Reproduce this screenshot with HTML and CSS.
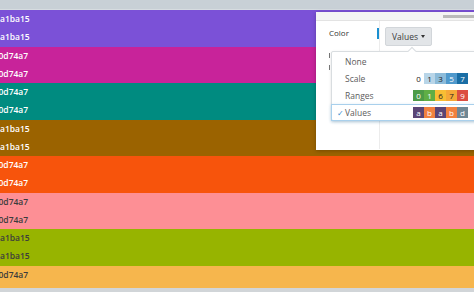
FILE: index.html
```html
<!DOCTYPE html>
<html lang="en">
<head>
    <meta charset="UTF-8">
    <title>Color format</title>
    <link rel="stylesheet" href="styles.css">
</head>
<body>

    <div class="table">
        <div class="table__top"></div>
        <div class="band band--purple">
            <div class="cell">a1ba15</div>
            <div class="cell">a1ba15</div>
        </div>
        <div class="band band--magenta">
            <div class="cell cell--cut">0d74a7</div>
            <div class="cell cell--cut">0d74a7</div>
        </div>
        <div class="band band--teal">
            <div class="cell cell--cut">0d74a7</div>
            <div class="cell cell--cut">0d74a7</div>
        </div>
        <div class="band band--brown">
            <div class="cell">a1ba15</div>
            <div class="cell">a1ba15</div>
        </div>
        <div class="band band--orange">
            <div class="cell cell--cut">0d74a7</div>
            <div class="cell cell--cut">0d74a7</div>
        </div>
        <div class="band band--pink band--dark">
            <div class="cell cell--cut">0d74a7</div>
            <div class="cell cell--cut">0d74a7</div>
        </div>
        <div class="band band--olive band--dark">
            <div class="cell">a1ba15</div>
            <div class="cell">a1ba15</div>
        </div>
        <div class="band band--yellow band--dark band--last">
            <div class="cell cell--cut">0d74a7</div>
        </div>
        <div class="table__scroll"></div>
    </div>

    <div class="editor">
        <div class="editor__head">
            <span class="editor__grip"></span>
        </div>
        <div class="editor__body">
            <div class="editor__labels">
                <div class="editor__label">Color</div>
                <span class="editor__tick"></span>
                <span class="editor__tick"></span>
            </div>
            <div class="editor__fields">
                <span class="editor__focus"></span>
                <button class="editor__btn">Values <span class="caret"></span></button>
            </div>
        </div>

        <ul class="menu">
            <li class="menu__item">None</li>
            <li class="menu__item">Scale
                <span class="swatches">
                    <span class="sw" style="background:#ffffff">0</span>
                    <span class="sw" style="background:#b8d5e8">1</span>
                    <span class="sw" style="background:#8cbbd9">3</span>
                    <span class="sw sw--light" style="background:#4f99cc">5</span>
                    <span class="sw sw--light" style="background:#1a6ea5">7</span>
                </span>
            </li>
            <li class="menu__item">Ranges
                <span class="swatches">
                    <span class="sw sw--light" style="background:#4c9b47">0</span>
                    <span class="sw sw--light" style="background:#5fae45">1</span>
                    <span class="sw" style="background:#f8be34">6</span>
                    <span class="sw" style="background:#f5a838">7</span>
                    <span class="sw sw--light" style="background:#dc4e41">9</span>
                </span>
            </li>
            <li class="menu__item is-selected"><span class="check">&#10003;</span>Values
                <span class="swatches">
                    <span class="sw sw--light" style="background:#5a4575">a</span>
                    <span class="sw sw--light" style="background:#f1813f">b</span>
                    <span class="sw sw--light" style="background:#5a4575">a</span>
                    <span class="sw sw--light" style="background:#f1813f">b</span>
                    <span class="sw sw--light" style="background:#708794">d</span>
                </span>
            </li>
        </ul>
    </div>

</body>
</html>
```

FILE: styles.css
```css
html {
  box-sizing: border-box;
}

*,
*::before,
*::after {
  box-sizing: inherit;
}

body {
  margin: 0;
  width: 474px;
  height: 292px;
  overflow: hidden;
  position: relative;
  font-family: "Open Sans", Lato, sans-serif;
}

ul {
  list-style: none;
  margin: 0;
  padding: 0;
}

button {
  border: 0;
  font-family: inherit;
  font-size: inherit;
  outline: none;
  appearance: none;
}

/* Table behind the editor */

.table {
  display: flex;
  flex-direction: column;
  height: 292px;
}

.table__top {
  height: 10px;
  background-color: #c8d0d6;
  border-bottom: 1px solid #d6dce0;
}

.band {
  color: #fff;
}

.band--dark {
  color: #3c3c3c;
}

.cell {
  height: 18.25px;
  line-height: 18.25px;
  font-size: 8.5px;
  font-weight: 600;
  white-space: nowrap;
}

.cell--cut {
  margin-left: -1.5px;
}

.band--purple { background-color: #7b51d7; }
.band--magenta { background-color: #c8239a; }
.band--teal { background-color: #008b80; }
.band--brown { background-color: #9b6300; }
.band--orange { background-color: #f7540c; }
.band--pink { background-color: #fd8f95; }
.band--olive { background-color: #97b400; }
.band--yellow { background-color: #f6b64d; }

.band--last {
  padding-bottom: 4px;
}

.table__scroll {
  flex: 1;
  background-color: #d1d5d8;
}

/* Editor panel */

.editor {
  position: absolute;
  left: 316px;
  top: 12px;
  width: 170px;
  height: 138px;
  background-color: #fff;
  box-shadow: 0 1px 4px rgba(0, 0, 0, 0.25);
  color: #333;
  font-size: 8px;
}

.editor__head {
  height: 9px;
  background-color: #f4f4f4;
  border-bottom: 1px solid #e3e3e3;
  display: flex;
  justify-content: flex-end;
  align-items: center;
  padding-right: 12px;
}

.editor__grip {
  width: 31px;
  height: 3px;
  background-image: radial-gradient(circle, #9a9a9a 0.6px, transparent 0.9px);
  background-size: 2px 2px;
}

.editor__body {
  display: flex;
  height: 128px;
}

.editor__labels {
  width: 64px;
  padding: 6px 0 0 13px;
  border-right: 1px solid #ececec;
}

.editor__label {
  height: 12px;
  line-height: 12px;
}

/* edges of the labels hidden by the open menu */
.editor__tick {
  display: block;
  width: 1px;
  height: 5px;
  background-color: #777;
}

.editor__tick:nth-of-type(1) {
  margin-top: 14px;
}

.editor__tick:nth-of-type(2) {
  margin-top: 7px;
}

.editor__fields {
  position: relative;
  display: flex;
  align-items: flex-start;
  padding: 6px 0 0 0;
}

.editor__focus {
  width: 2px;
  height: 11px;
  margin-top: 1px;
  margin-left: -3px;
  background-color: #1a8fd0;
}

.editor__btn {
  margin-left: 6px;
  height: 19px;
  width: 47px;
  background-color: #e2e5e8;
  border: 1px solid #d2d6da;
  border-radius: 2px;
  color: #3b3b3b;
  font-size: 8.5px;
  padding: 0;
  display: flex;
  align-items: center;
  justify-content: center;
  gap: 3px;
}

.caret {
  width: 0;
  height: 0;
  border-left: 2.5px solid transparent;
  border-right: 2.5px solid transparent;
  border-top: 3px solid #333;
}

/* Dropdown menu */

.menu {
  position: absolute;
  left: 15px;
  top: 39px;
  width: 170px;
  background-color: #fff;
  border: 1px solid #d9dde0;
  border-radius: 2px;
  box-shadow: 0 1px 3px rgba(0, 0, 0, 0.12);
  padding-top: 1px;
}

.menu::before {
  content: "";
  position: absolute;
  top: -4px;
  left: 77px;
  width: 6px;
  height: 6px;
  background-color: #fff;
  border-left: 1px solid #d9dde0;
  border-top: 1px solid #d9dde0;
  transform: rotate(45deg);
}

.menu__item {
  position: relative;
  height: 17px;
  display: flex;
  align-items: center;
  padding-left: 13px;
  color: #5c5c5c;
  font-size: 8.5px;
}

.menu__item.is-selected {
  border: 1px solid #a9d0ec;
  margin: 0 -1px -1px;
  padding-left: 5px;
  box-shadow: 0 1px 3px rgba(60, 140, 200, 0.3);
}

.check {
  color: #3a8fd2;
  width: 8px;
  font-size: 8px;
}

.swatches {
  position: absolute;
  left: 81px;
  top: 3px;
  display: flex;
}

.is-selected .swatches {
  left: 81px;
  top: 2px;
}

.sw {
  width: 11px;
  height: 11px;
  line-height: 11px;
  text-align: center;
  font-size: 8px;
  color: #222;
}

.sw--light {
  color: #fff;
}
```
